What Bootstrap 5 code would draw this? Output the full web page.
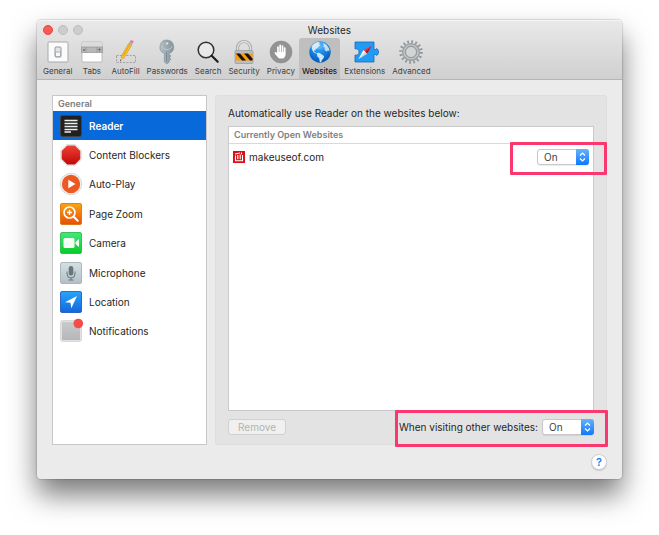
<!DOCTYPE html>
<html lang="en">
<head>
<meta charset="utf-8">
<meta name="viewport" content="width=device-width, initial-scale=1">
<title>Websites</title>
<link rel="stylesheet" href="https://cdn.jsdelivr.net/npm/bootstrap@5.3.0/dist/css/bootstrap.min.css">
<style>
  body { font-family: Inter, Roboto, sans-serif; font-size: 10px; line-height: 14px; color: #262626; background: #fff; padding: 20px 37px 56px; overflow: hidden; }
  svg { display: block; overflow: visible; }
  .prefs { background: #ebebeb; border-radius: 4px; box-shadow: 0 0 1px 1px rgba(0,0,0,.12), 0 16px 28px rgba(0,0,0,.52); }
  .toolbar { height: 60px; background: linear-gradient(#e9e9e9, #d0d0d0); border-bottom: 1px solid #b5b5b5; border-radius: 4px 4px 0 0; box-shadow: inset 0 1px #f5f5f5; }
  .titlebar { height: 18px; padding: 5px 6px 0; }
  .dots { gap: 5px; left: 6px; top: 5px; }
  .dot { width: 10px; height: 10px; border-radius: 50%; border: 1px solid #bdbdbd; background: #cdcdcd; padding: 0; }
  .dot-close { background: #fc5b57; border-color: #e2463f; }
  .win-title { line-height: 10px; }
  .tools { padding-left: 3px; gap: 1px; }
  .tool { border: 0; background: none; color: #404040; font-size: 8px; line-height: 10px; min-width: 31px; height: 41px; padding: 2px 3px 3px; }
  .tool svg { width: 24px; height: 24px; margin: 0 auto 2px; }
  .tool.active { background: #bfbfbf; color: #1c1c1c; border-radius: 3px 3px 0 0; font-weight: 500; }
  .main-area { padding: 15px 15px 0; gap: 8px; }
  .side { width: 155px; background: #fff; border: 1px solid #c8c8c8; }
  .heading-row { font-size: 9px; font-weight: 600; color: #808080; padding-left: 5px; line-height: 15px; }
  .side-list { height: 235px; }
  .side-item { border: 0; background: none; color: #262626; padding: 0 0 0 7px; gap: 7px; text-align: left; }
  .side-item.active { background: #0869da; color: #fff; font-weight: 600; }
  .side-item svg { width: 22px; height: 22px; }
  .pane { background: #e3e3e3; border: 1px solid #dedede; border-radius: 3px; padding: 10px 12px 9px; }
  .sites { background: #fff; border: 1px solid #cacaca; margin: 6px 0 8px; }
  .sites .heading-row { line-height: 16px; border-bottom: 1px solid #d9d9d9; }
  .site-row { height: 25px; padding: 0 4px; }
  .picker { width: 52px; height: 16px; }
  .picker select { appearance: none; border: 1px solid #c8c8c8; border-radius: 3px; background: #fff; color: #404040; font-size: 10px; line-height: 12px; padding: 0 14px 0 6px; box-shadow: 0 1px 1px rgba(0,0,0,.08); }
  .picker svg { right: 0; top: 0; width: 13px; height: 16px; pointer-events: none; }
  .marked::after { content: ""; position: absolute; border: 3px solid #fb3770; border-radius: 1px; pointer-events: none; }
  .mark-site::after { inset: -7px -18px -10px -27px; }
  .mark-other::after { inset: -9px -14px -12px -4px; }
  .btn-remove { width: 58px; height: 16px; border: 1px solid #d0d0d0; border-radius: 3px; background: #f0f0f0; color: #b3b3b3; font-size: 10px; line-height: 12px; padding: 0; }
  .foot { padding: 9px 15px 9px; }
  .help { width: 16px; height: 16px; border: 1px solid #cfcfcf; border-radius: 50%; background: #fff; color: #1583f7; font-size: 11px; font-weight: 600; line-height: 14px; padding: 0; box-shadow: 0 1px 1px rgba(0,0,0,.15); }
</style>
<script src="https://cdn.jsdelivr.net/npm/bootstrap@5.3.0/dist/js/bootstrap.bundle.min.js"></script>
</head>
<body class="min-vh-100 d-flex flex-column m-0">
<svg width="0" height="0" class="position-absolute" aria-hidden="true">
  <defs>
    <linearGradient id="gRed" x2="0" y2="1"><stop stop-color="#ee4136"/><stop offset="1" stop-color="#c00808"/></linearGradient>
    <linearGradient id="gOrange" x2="0" y2="1"><stop stop-color="#fba414"/><stop offset="1" stop-color="#e84e06"/></linearGradient>
    <linearGradient id="gGreen" x2="0" y2="1"><stop stop-color="#45e87c"/><stop offset="1" stop-color="#08cb28"/></linearGradient>
    <linearGradient id="gMic" x2="0" y2="1"><stop stop-color="#d4e0e4"/><stop offset="1" stop-color="#b2c0c5"/></linearGradient>
    <linearGradient id="gBlue" x2="0" y2="1"><stop stop-color="#28a4fb"/><stop offset="1" stop-color="#1267de"/></linearGradient>
    <linearGradient id="gNote" x2="0" y2="1"><stop stop-color="#c9cacc"/><stop offset="1" stop-color="#b5b6b9"/></linearGradient>
    <linearGradient id="gMetal" x2="1"><stop stop-color="#b6c0c6"/><stop offset="1" stop-color="#82929b"/></linearGradient>
    <radialGradient id="gGlobe" cx=".45" cy=".25" r=".8"><stop stop-color="#3aaefc"/><stop offset=".6" stop-color="#0f78dc"/><stop offset="1" stop-color="#064ea4"/></radialGradient>
    <linearGradient id="gArrow" x2="0" y2="1"><stop stop-color="#66b2fb"/><stop offset="1" stop-color="#0f78fb"/></linearGradient>
  </defs>
</svg>

<main class="prefs flex-grow-1 d-flex flex-column">
  <header class="toolbar">
    <div class="titlebar position-relative text-center">
      <div class="dots position-absolute d-flex">
        <button class="dot dot-close" aria-label="Close"></button>
        <button class="dot" aria-label="Minimize" disabled></button>
        <button class="dot" aria-label="Zoom" disabled></button>
      </div>
      <div class="win-title">Websites</div>
    </div>
    <nav class="tools d-flex" aria-label="Preferences">
      <button class="tool"><svg viewBox="0 0 24 24"><rect x="2" y="2" width="20" height="20" rx="1" fill="#fbfbfb" stroke="#a9a9a9"/><rect x="9" y="7" width="6" height="10" rx="1" fill="#e3e5e6" stroke="#929a9e"/><path d="M9.500 12h5v4.500h-5z" fill="#f8f8f8" stroke="#929a9e" stroke-width=".7"/></svg>General</button>
      <button class="tool"><svg viewBox="0 0 24 24"><path d="M2 2h20v20H2z" fill="#fff" stroke="#b0b0b0" stroke-width=".8"/><path d="M2 2h20v5H2z" fill="#dcdcdc"/><path d="M1.500 7h21v5.500h-21z" fill="#b9b9b9" stroke="#929292" stroke-width=".7"/><path d="M6 7v5.500M17 7v5.500" stroke="#909090" stroke-width=".7"/><path d="M3 9l2 2m0-2l-2 2M19.500 8v3.500M17.800 9.700h3.500" stroke="#666" stroke-width=".7"/></svg>Tabs</button>
      <button class="tool"><svg viewBox="0 0 24 24"><rect x="2.500" y="15.500" width="19" height="7" fill="none" stroke="#929292" stroke-width=".8" stroke-dasharray="2 1.300"/><path d="M6 21l1-4 3 1.500z" fill="#e9c993"/><path d="M6 21.500l.5-2 1 .6z" fill="#222"/><path d="M7 17L14.500 3.800l3 1.700L9.600 18.600z" fill="#ffc61d" stroke="#bc7f12" stroke-width=".5"/><path d="M9 16l7-12" stroke="#ee9b10"/><path d="M14.500 3.800l1.200-2 3 1.700-1.200 2z" fill="#a9b2ba"/><path d="M15.600 2l1-1.500q1.800-.8 3 1l-1 2z" fill="#e9798f"/></svg>AutoFill</button>
      <button class="tool"><svg viewBox="0 0 24 24"><path d="M12 0a7 7 0 0 0-2.700 13.500V22l2.700 2 2.300-2v-1.500L16 19l-1.700-1.500L16 16l-1.700-1.500v-1A7 7 0 0 0 12 0z" fill="url(#gMetal)" stroke="#81919a" stroke-width=".6"/><circle cx="12" cy="3.500" r="1.700" fill="#e0e2e3" stroke="#7d8b93" stroke-width=".6"/><path d="M11.500 12v10" stroke="#72838c" stroke-width=".8"/><path d="M7 6a5 3.500 0 0 0 10 0" fill="none" stroke="#cbd3d7" stroke-width=".7"/></svg>Passwords</button>
      <button class="tool"><svg viewBox="0 0 24 24"><circle cx="10" cy="10" r="7.800" fill="#f0f0f0" fill-opacity=".65" stroke="#303030" stroke-width="1.500"/><path d="M15.700 15.700l6 6" stroke="#1d1d1d" stroke-width="2.200" stroke-linecap="round"/></svg>Search</button>
      <button class="tool"><svg viewBox="0 0 24 24"><path d="M5.500 12V8a6.500 6.500 0 0 1 13 0v4" fill="none" stroke="#a4a8ab" stroke-width="3.200"/><path d="M5.500 12V8a6.500 6.500 0 0 1 13 0v4" fill="none" stroke="#dfe1e3" stroke-width="1.400"/><rect x="3" y="10.500" width="18" height="13" rx="1" fill="#bbbdbf" stroke="#8c8f91" stroke-width=".6"/><path d="M3.500 13.500h17v7h-17z" fill="#f99d0e"/><path d="M4 13.500h4l6 7h-4zM12 13.500h4l4.500 5v2H18z" fill="#171310"/></svg>Security</button>
      <button class="tool"><svg viewBox="0 0 24 24"><circle cx="12" cy="12" r="11" fill="#939393" stroke="#858585" stroke-width=".5"/><path d="M9 13V7m2.200 5V5.300m2.300 6.700V6m2.200 6V8" stroke="#fff" stroke-width="1.700" stroke-linecap="round"/><path d="M8.100 12h8.500v2c0 2-1 3.600-2.300 4.600h-4C9 17.500 7.500 15.700 6 13.700c-1-1.400.5-2.200 1.400-1.300l1.300 1.300z" fill="#fff"/></svg>Privacy</button>
      <button class="tool active" aria-current="page"><svg viewBox="0 0 24 24"><circle cx="12" cy="12" r="10.700" fill="url(#gGlobe)"/><path d="M3.500 6.500C5 4 7.500 2.200 10 1.900l2 .8-1 1.500 1.500.8-1.800 1.500L9 8.500 7.500 9l.3 1.500L6 10.300l.7 1.900 2 .8 2.500-.2 3.500 2.200 1.500 1.200-1 2.500-1.500 1.500-.5 2.200-1.500-.6-.5-3.500-2-2L9 13.700l-3-1-2-3z" fill="#cfe7f2"/><path d="M15 3l3.500 1.700 2.500 3.500.6 3-1.600-.7-1.500 1-2-1.600.3-2.400-1.800-.9.800-1.200z" fill="#bedeed"/><ellipse cx="12" cy="5.500" rx="7" ry="4" fill="#fff" opacity=".16"/></svg>Websites</button>
      <button class="tool"><svg viewBox="0 0 24 24"><path d="M2 2h19v7.500h1.500c.5-1.500 3-1 3 2.500s-2.500 4-3 2.500H21V22H2v-7c2.500.7 4-.7 4-3S4.500 8.300 2 9z" fill="#209cf5" stroke="#1768bd" stroke-width=".8"/><path d="M18.500 6l-8 4 3.500 3.800z" fill="#ee3440"/><path d="M18.500 6L14 13.800l-1.700-1.800z" fill="#b61127"/><path d="M5.500 19l5-9 3.500 3.800z" fill="#fff"/><path d="M5.500 19l6.700-7 1.800 1.800z" fill="#c1cbd4"/></svg>Extensions</button>
      <button class="tool"><svg viewBox="0 0 24 24"><circle cx="12" cy="12" r="10.300" fill="none" stroke="#8f9598" stroke-width="3" stroke-dasharray="1.700 2.345"/><circle cx="12" cy="12" r="7.300" fill="none" stroke="#9ba0a3" stroke-width="3.600"/><circle cx="12" cy="12" r="7" fill="none" stroke="#c7cbcd" stroke-width="1.200"/><circle cx="12" cy="12" r="5.500" fill="#d3d4d5" stroke="#81878a" stroke-width=".7"/></svg>Advanced</button>
    </nav>
  </header>

  <div class="main-area d-flex flex-grow-1">
    <aside class="side flex-shrink-0">
      <div class="heading-row">General</div>
      <div class="side-list d-flex flex-column">
        <button class="side-item active w-100 flex-fill d-flex align-items-center" aria-current="true"><svg viewBox="0 0 22 22"><rect x=".5" y=".5" width="21" height="21" rx="2" fill="#202020" stroke="#424242"/><path d="M4.500 5.500h13M4.500 8.500h13M4.500 11.500h13M4.500 14.500h13" stroke="#eee" stroke-width="1.500"/><path d="M4.500 17h6.500" stroke="#eee" stroke-width="1.500"/></svg>Reader</button>
        <button class="side-item w-100 flex-fill d-flex align-items-center"><svg viewBox="0 0 22 22"><path d="M6.700.5h8.600l6.200 6.200v8.600l-6.200 6.200H6.700L.5 15.300V6.700z" fill="#eee" stroke="#ddd" stroke-width=".7"/><path d="M7.200 1.500h7.600l5.500 5.500v8l-5.500 5.500H7.200L1.700 15V7z" fill="url(#gRed)"/></svg>Content Blockers</button>
        <button class="side-item w-100 flex-fill d-flex align-items-center"><svg viewBox="0 0 22 22"><circle cx="11" cy="11" r="10.800" fill="#f3f3f3" stroke="#ccc" stroke-width=".7"/><circle cx="11" cy="11" r="9.200" fill="#ec5a24"/><path d="M8.300 6.700v8.600l7.200-4.300z" fill="#fff"/></svg>Auto-Play</button>
        <button class="side-item w-100 flex-fill d-flex align-items-center"><svg viewBox="0 0 22 22"><rect x=".5" y=".5" width="21" height="21" rx="1.500" fill="url(#gOrange)" stroke="#d56b0a" stroke-width=".8"/><circle cx="9.500" cy="9.500" r="5.500" fill="none" stroke="#fff" stroke-width="1.600"/><path d="M9.500 7v5M7 9.500h5" stroke="#fff" stroke-width="1.300"/><path d="M13.700 13.700l4 4" stroke="#fff" stroke-width="2" stroke-linecap="round"/></svg>Page Zoom</button>
        <button class="side-item w-100 flex-fill d-flex align-items-center"><svg viewBox="0 0 22 22"><rect x=".5" y=".5" width="21" height="21" rx="1.500" fill="url(#gGreen)" stroke="#1db640" stroke-width=".8"/><rect x="3.500" y="6" width="11" height="10" rx="1.500" fill="#f5fff6"/><path d="M15.500 10l3.500-3v8l-3.500-3z" fill="#f5fff6"/></svg>Camera</button>
        <button class="side-item w-100 flex-fill d-flex align-items-center"><svg viewBox="0 0 22 22"><rect x=".5" y=".5" width="21" height="21" rx="1.500" fill="url(#gMic)" stroke="#9fabaf" stroke-width=".8"/><rect x="8.700" y="4" width="4.600" height="9.500" rx="2.300" fill="#68767b"/><path d="M7 9.500V12a4 4 0 0 0 8 0V9.500M11 16v2M8.500 18h5" fill="none" stroke="#68767b"/></svg>Microphone</button>
        <button class="side-item w-100 flex-fill d-flex align-items-center"><svg viewBox="0 0 22 22"><rect x=".5" y=".5" width="21" height="21" rx="1.500" fill="url(#gBlue)" stroke="#1650ba" stroke-width=".8"/><path d="M17 5L5 11.200l5.500.6.8 5.400z" fill="#fff"/></svg>Location</button>
        <button class="side-item w-100 flex-fill d-flex align-items-center"><svg viewBox="0 0 22 22"><rect x=".5" y=".5" width="21" height="21" rx="2" fill="#e2e2e2" stroke="#d2d2d2" stroke-width=".8"/><rect x="2" y="2" width="18" height="18" fill="url(#gNote)"/><circle cx="18.300" cy="3.500" r="4.800" fill="#f54b49"/></svg>Notifications</button>
      </div>
    </aside>

    <section class="pane flex-grow-1 d-flex flex-column">
      <div>Automatically use Reader on the websites below:</div>
      <div class="sites flex-grow-1">
        <div class="heading-row">Currently Open Websites</div>
        <div class="site-row d-flex align-items-center">
          <svg class="me-1" width="12" height="12" viewBox="0 0 12 12" aria-hidden="true"><rect width="12" height="12" fill="#d90f18"/><path d="M2.500 4.500v5.200h7V4M4.800 4v4.300M7.200 3.500v4.800M2 3l5-1M8.500 1.500v1.700" fill="none" stroke="#fff" stroke-width="1.100"/></svg>
          <label for="siteMode">makeuseof.com</label>
          <div class="picker marked mark-site position-relative ms-auto">
            <select id="siteMode" class="w-100 h-100 d-block"><option>On</option><option>Off</option></select>
            <svg class="position-absolute" viewBox="0 0 13 16"><path d="M0 0h10a3 3 0 0 1 3 3v10a3 3 0 0 1-3 3H0z" fill="url(#gArrow)"/><path d="M4 6.500L6.500 4 9 6.500M4 9.500L6.500 12 9 9.500" fill="none" stroke="#fff" stroke-width="1.200"/></svg>
          </div>
        </div>
      </div>
      <div class="d-flex align-items-center justify-content-between">
        <button class="btn-remove" disabled>Remove</button>
        <div class="marked mark-other position-relative d-flex align-items-center">
          <label for="otherMode" class="me-1">When visiting other websites:</label>
          <div class="picker position-relative">
            <select id="otherMode" class="w-100 h-100 d-block"><option>On</option><option>Off</option></select>
            <svg class="position-absolute" viewBox="0 0 13 16"><path d="M0 0h10a3 3 0 0 1 3 3v10a3 3 0 0 1-3 3H0z" fill="url(#gArrow)"/><path d="M4 6.500L6.500 4 9 6.500M4 9.500L6.500 12 9 9.500" fill="none" stroke="#fff" stroke-width="1.200"/></svg>
          </div>
        </div>
      </div>
    </section>
  </div>

  <footer class="foot d-flex justify-content-end">
    <button class="help" aria-label="Help">?</button>
  </footer>
</main>
</body>
</html>
